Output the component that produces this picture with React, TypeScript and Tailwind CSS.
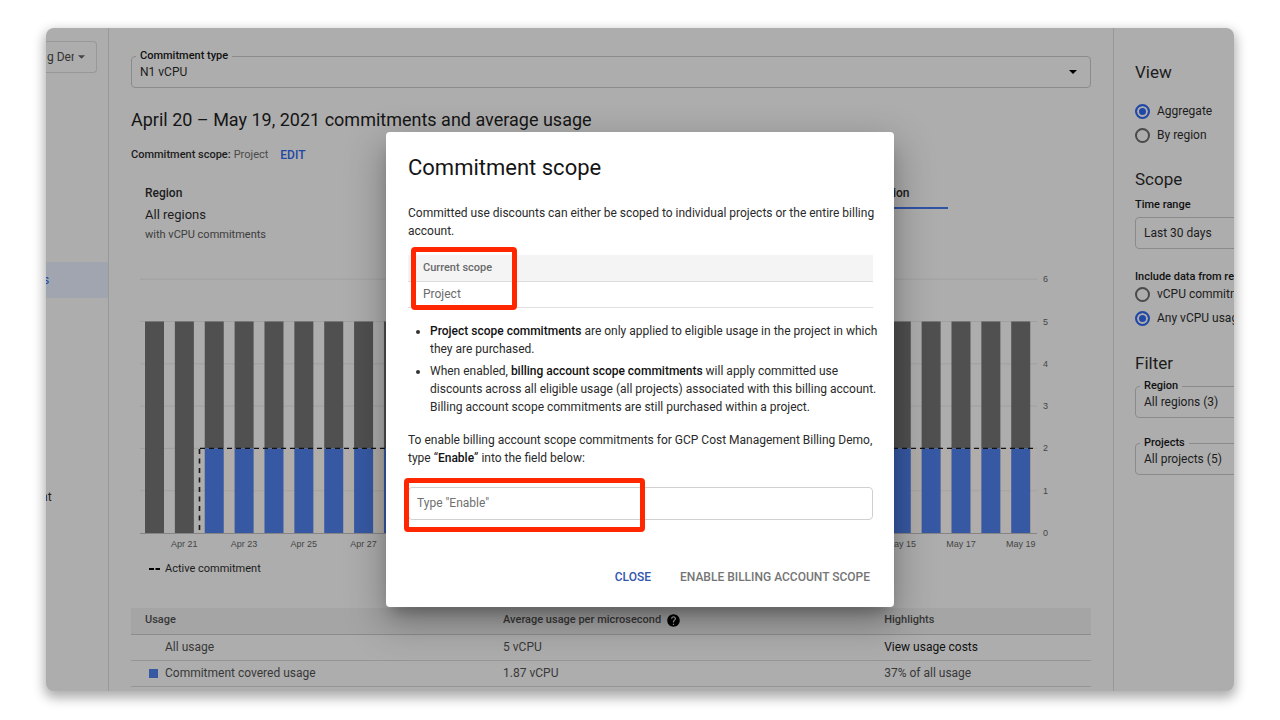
import type { ReactNode } from "react";

const DAYS = 30;
const FIRST_COVERED_DAY = 2;
const PITCH = 29.87;
const BAR_WIDTH = 19;
const BASELINE = 263;
const UNIT = 42.3;

const dateLabels = [
  { day: 1, text: "Apr 21" },
  { day: 3, text: "Apr 23" },
  { day: 5, text: "Apr 25" },
  { day: 7, text: "Apr 27" },
  { day: 25, text: "May 15" },
  { day: 27, text: "May 17" },
  { day: 29, text: "May 19" },
];

function UsageChart() {
  const levelY = (level: number) => BASELINE - level * UNIT;
  const barX = (day: number) => 14 + day * PITCH;
  return (
    <svg viewBox="0 0 960 282" className="mt-[27px] block h-auto w-full" role="img" aria-label="Commitments and average usage per day">
      {[1, 2, 3, 4, 5, 6].map((level) => (
        <line key={level} x1="9" x2="906" y1={levelY(level)} y2={levelY(level)} stroke="#a0a0a0" strokeWidth="1" />
      ))}
      <rect x="69" y={levelY(2)} width="836" height={2 * UNIT} fill="#b0adaa" />
      <line x1="69" x2="906" y1={levelY(1)} y2={levelY(1)} stroke="#a6a4a1" />
      <line x1="9" x2="906" y1={BASELINE + 0.5} y2={BASELINE + 0.5} stroke="#858585" />
      {Array.from({ length: DAYS }, (_, day) => {
        const covered = day >= FIRST_COVERED_DAY ? 2 : 0;
        return (
          <g key={day}>
            <rect x={barX(day)} y={levelY(5)} width={BAR_WIDTH} height={(5 - covered) * UNIT} fill="#505050" />
            {covered > 0 && <rect x={barX(day)} y={levelY(2)} width={BAR_WIDTH} height={2 * UNIT} fill="#3759a4" />}
          </g>
        );
      })}
      <path d={`M68.5 ${BASELINE - 3}V${levelY(2)}`} stroke="#1a1a1a" strokeWidth="1.6" strokeDasharray="5 4.5" />
      <path d={`M69 ${levelY(2)}H905`} stroke="#111" strokeWidth="1.2" strokeDasharray="5 4" />
      <g className="fill-[#454545] font-['Liberation_Sans',Arial,sans-serif] text-[9px]">
        {[0, 1, 2, 3, 4, 5, 6].map((level) => (
          <text key={level} x="912" y={levelY(level) + 3}>
            {level}
          </text>
        ))}
        {dateLabels.map(({ day, text }) => (
          <text key={text} x={barX(day) + BAR_WIDTH / 2} y="277" textAnchor="middle">
            {text}
          </text>
        ))}
      </g>
    </svg>
  );
}

function OutlinedSelect({ id, label, value, className }: { id: string; label: string; value: string; className: string }) {
  return (
    <div className={`relative ${className}`}>
      <label htmlFor={id} className="absolute -top-2 left-[5px] bg-[#adadad] px-1 text-[11px] leading-4 font-medium text-[#111]">
        {label}
      </label>
      <select id={id} className="block h-8 w-full appearance-none rounded border border-[#8b8b8b] bg-transparent px-2 text-xs text-[#1c1c1c]">
        <option>{value}</option>
      </select>
    </div>
  );
}

function Radio({ name, label, checked = false }: { name: string; label: string; checked?: boolean }) {
  return (
    <label className="flex h-6 items-center gap-[7px] text-xs whitespace-nowrap text-[#1c1c1c]">
      <input
        type="radio"
        name={name}
        defaultChecked={checked}
        className="size-[15px] shrink-0 appearance-none rounded-full border-2 border-[#4a4a4a] checked:border-[#2148a6] checked:bg-[#2148a6] checked:shadow-[inset_0_0_0_2px_#adadad]"
      />
      {label}
    </label>
  );
}

function HelpIcon() {
  return (
    <svg viewBox="0 0 24 24" className="size-[15px]" fill="#000" aria-hidden="true">
      <path d="M12 2C6.48 2 2 6.48 2 12s4.480 10 10 10 10-4.480 10-10S17.520 2 12 2zm1 17h-2v-2h2v2zm2.070-7.750-.9.920C13.450 12.900 13 13.500 13 15h-2v-.5c0-1.100.450-2.100 1.170-2.830l1.240-1.260c.370-.360.590-.860.590-1.410 0-1.100-.9-2-2-2s-2 .9-2 2H8c0-2.210 1.790-4 4-4s4 1.790 4 4c0 .880-.360 1.680-.930 2.250z" />
    </svg>
  );
}

function UsageRow({ name, usage, swatch = false, children }: { name: string; usage: string; swatch?: boolean; children: ReactNode }) {
  return (
    <tr className="h-[26px] border-b border-[#969696]">
      <td className="pl-[18px]">
        <span className="flex items-center gap-[7px]">
          <span className={swatch ? "size-[9px] bg-[#3759a4]" : "size-[9px]"} />
          {name}
        </span>
      </td>
      <td className="pl-[14px]">{usage}</td>
      <td className="pl-[14px]">{children}</td>
    </tr>
  );
}

function CommitmentScopeDialog() {
  return (
    <div
      role="dialog"
      aria-labelledby="scope-title"
      className="w-[508px] max-w-full rounded bg-white pt-[22px] pr-[21px] pb-3 pl-[22px] text-xs leading-[18px] text-[#2a2a2a] shadow-[0_11px_15px_-7px_rgba(0,0,0,0.3),0_14px_38px_3px_rgba(0,0,0,0.28)]"
    >
      <h2 id="scope-title" className="text-[22px] leading-7 text-[#151515]">
        Commitment scope
      </h2>
      <p className="mt-[22px] whitespace-nowrap">
        Committed use discounts can either be scoped to individual projects or the entire billing
        <br />
        account.
      </p>
      <div className="relative mt-[15px]">
        <table className="w-full text-left text-[#6a6a6a]">
          <thead>
            <tr className="h-[26px] border-b border-[#dcdcdc] bg-[#f4f4f4]">
              <th className="pl-[15px] text-[11px] font-medium">Current scope</th>
            </tr>
          </thead>
          <tbody>
            <tr className="h-[26px] border-b border-[#e0e0e0]">
              <td className="pl-[15px]">Project</td>
            </tr>
          </tbody>
        </table>
        <div className="pointer-events-none absolute -top-2 left-[3px] h-[63px] w-[106px] rounded-sm border-[5px] border-[#ff2600]" />
      </div>
      <ul className="mt-[14px] flex flex-col gap-1">
        {[
          <>
            <b className="font-medium text-[#111]">Project scope commitments</b> are only applied to eligible usage in the project in which
            <br />
            they are purchased.
          </>,
          <>
            When enabled, <b className="font-medium text-[#111]">billing account scope commitments</b> will apply committed use
            <br />
            discounts across all eligible usage (all projects) associated with this billing account.
            <br />
            Billing account scope commitments are still purchased within a project.
          </>,
        ].map((item, i) => (
          <li key={i} className="flex gap-[10px] pl-2">
            <span className="mt-2 size-1 shrink-0 rounded-full bg-[#333]" />
            <span className="whitespace-nowrap">{item}</span>
          </li>
        ))}
      </ul>
      <p className="mt-[15px] whitespace-nowrap">
        To enable billing account scope commitments for GCP Cost Management Billing Demo,
        <br />
        type “<b className="font-medium text-[#111]">Enable</b>” into the field below:
      </p>
      <div className="relative mt-5">
        <input
          type="text"
          aria-label="Confirmation"
          placeholder='Type "Enable"'
          className="block h-[33px] w-full rounded border border-[#d0d0d0] px-2 text-xs placeholder:text-[#707070]"
        />
        <div className="pointer-events-none absolute -top-[9px] -left-1 h-[54px] w-[241px] rounded-sm border-[5px] border-[#ff2600]" />
      </div>
      <div className="mt-[39px] flex justify-end gap-[13px] pr-[3px]">
        <button type="button" className="h-9 px-2 font-medium text-[#3356ae]">
          CLOSE
        </button>
        <button type="button" className="h-9 pl-2 font-medium text-[#757575]">
          ENABLE BILLING ACCOUNT SCOPE
        </button>
      </div>
    </div>
  );
}

export default function App() {
  return (
    <div className="flex min-h-screen bg-white px-[46px] pt-7 pb-[29px] font-[Roboto,sans-serif]">
      <div className="relative flex flex-1 overflow-clip rounded-lg bg-[#adadad] text-xs text-[#1c1c1c] shadow-[0_5px_12px_2px_rgba(0,0,0,0.32)]">
        <aside className="w-[63px] shrink-0 overflow-hidden border-r border-[#999]">
          <button type="button" className="mt-[13px] flex h-8 w-[51px] items-center rounded-r border border-l-0 border-[#989898] pl-px text-[#333]">
            <span className="w-[27px] overflow-hidden text-left whitespace-nowrap">g Dem</span>
            <svg viewBox="0 0 8 4" className="ml-1 h-1 w-[7px]" fill="#444" aria-hidden="true">
              <path d="M0 0h8L4 4z" />
            </svg>
          </button>
          <nav>
            <a href="#commitments" className="mt-[189px] flex h-9 items-center bg-[#a0a5b0] text-[#2148a6]">
              <span className="-ml-[3px]">s</span>
            </a>
            <a href="#management" className="mt-[189px] flex h-5 items-center text-[#222]">
              <span className="-ml-[5px]">nt</span>
            </a>
          </nav>
        </aside>

        <main className="min-w-0 flex-1 px-[22px] pt-7 pb-1">
          <div className="relative">
            <OutlinedSelect id="commitment-type" label="Commitment type" value="N1 vCPU" className="w-full" />
            <svg viewBox="0 0 8 4" className="pointer-events-none absolute top-[14px] right-[14px] h-1 w-2" fill="#000" aria-hidden="true">
              <path d="M0 0h8L4 4z" />
            </svg>
          </div>
          <h1 className="mt-5 text-[18px] leading-6 text-[#151515]">April 20 – May 19, 2021 commitments and average usage</h1>
          <div className="mt-[13px] flex items-center text-[11px] leading-5 text-[#4a4a4a]">
            <b className="font-medium text-[#1c1c1c]">Commitment scope:</b>
            <span className="ml-[3px]">Project</span>
            <button type="button" className="ml-3 text-xs font-medium text-[#2148a6]">
              EDIT
            </button>
          </div>
          <div className="mt-5 flex items-start justify-between">
            <div className="pl-[14px]">
              <div className="text-xs leading-4 font-medium">Region</div>
              <div className="mt-1 text-[13px] leading-5">All regions</div>
              <div className="mt-0.5 text-[11px] leading-4 text-[#3c3c3c]">with vCPU commitments</div>
            </div>
            <div className="mr-[143px] h-6 w-[55px] border-b-2 border-[#2f53a5] text-xs leading-4 font-medium">ion</div>
          </div>
          <UsageChart />
          <div className="mt-[9px] flex items-center gap-[5px] pl-[18px] text-[11px] leading-4">
            <svg viewBox="0 0 11 2" className="h-0.5 w-[11px]" fill="#000" aria-hidden="true">
              <path d="M0 0h5v2H0zM6.500 0h4.500v2H6.500z" />
            </svg>
            Active commitment
          </div>
          <table className="mt-[31px] w-full table-fixed border-collapse text-left text-[#383838]">
            <colgroup>
              <col className="w-[37.3%]" />
              <col className="w-[39.7%]" />
              <col />
            </colgroup>
            <thead>
              <tr className="h-[26px] border-b border-[#8c8c8c] bg-[#a5a5a5] text-[11px]">
                <th className="pl-[14px] font-medium">Usage</th>
                <th className="pl-[14px] font-medium">
                  <span className="flex items-center gap-[5px]">
                    Average usage per microsecond
                    <HelpIcon />
                  </span>
                </th>
                <th className="pl-[14px] font-medium">Highlights</th>
              </tr>
            </thead>
            <tbody>
              <UsageRow name="All usage" usage="5 vCPU">
                <a href="#usage-costs" className="text-[#111]">
                  View usage costs
                </a>
              </UsageRow>
              <UsageRow name="Commitment covered usage" usage="1.87 vCPU" swatch>
                37% of all usage
              </UsageRow>
            </tbody>
          </table>
        </main>

        <aside className="w-[121px] shrink-0 overflow-hidden border-l border-[#999] pt-8 pl-[21px]">
          <h2 className="text-[17px] leading-6">View</h2>
          <div className="mt-[15px]">
            <Radio name="view" label="Aggregate" checked />
            <Radio name="view" label="By region" />
          </div>
          <h2 className="mt-5 text-[17px] leading-6">Scope</h2>
          <label htmlFor="time-range" className="mt-1 block text-[11px] leading-5 font-medium text-[#111]">
            Time range
          </label>
          <select id="time-range" className="mt-0.5 block h-8 w-40 appearance-none rounded border border-[#8b8b8b] px-2 text-xs">
            <option>Last 30 days</option>
          </select>
          <div className="mt-[18px] text-[11px] leading-5 font-medium whitespace-nowrap text-[#111]">Include data from regions</div>
          <div className="-mt-[5px]">
            <Radio name="source" label="vCPU commitments" />
            <Radio name="source" label="Any vCPU usage" checked />
          </div>
          <h2 className="mt-[21px] text-[17px] leading-6">Filter</h2>
          <OutlinedSelect id="region" label="Region" value="All regions (3)" className="mt-[11px] w-40" />
          <OutlinedSelect id="projects" label="Projects" value="All projects (5)" className="mt-[25px] w-40" />
        </aside>

        <div className="absolute inset-0 flex items-start justify-center pt-[104px]">
          <CommitmentScopeDialog />
        </div>
      </div>
    </div>
  );
}
